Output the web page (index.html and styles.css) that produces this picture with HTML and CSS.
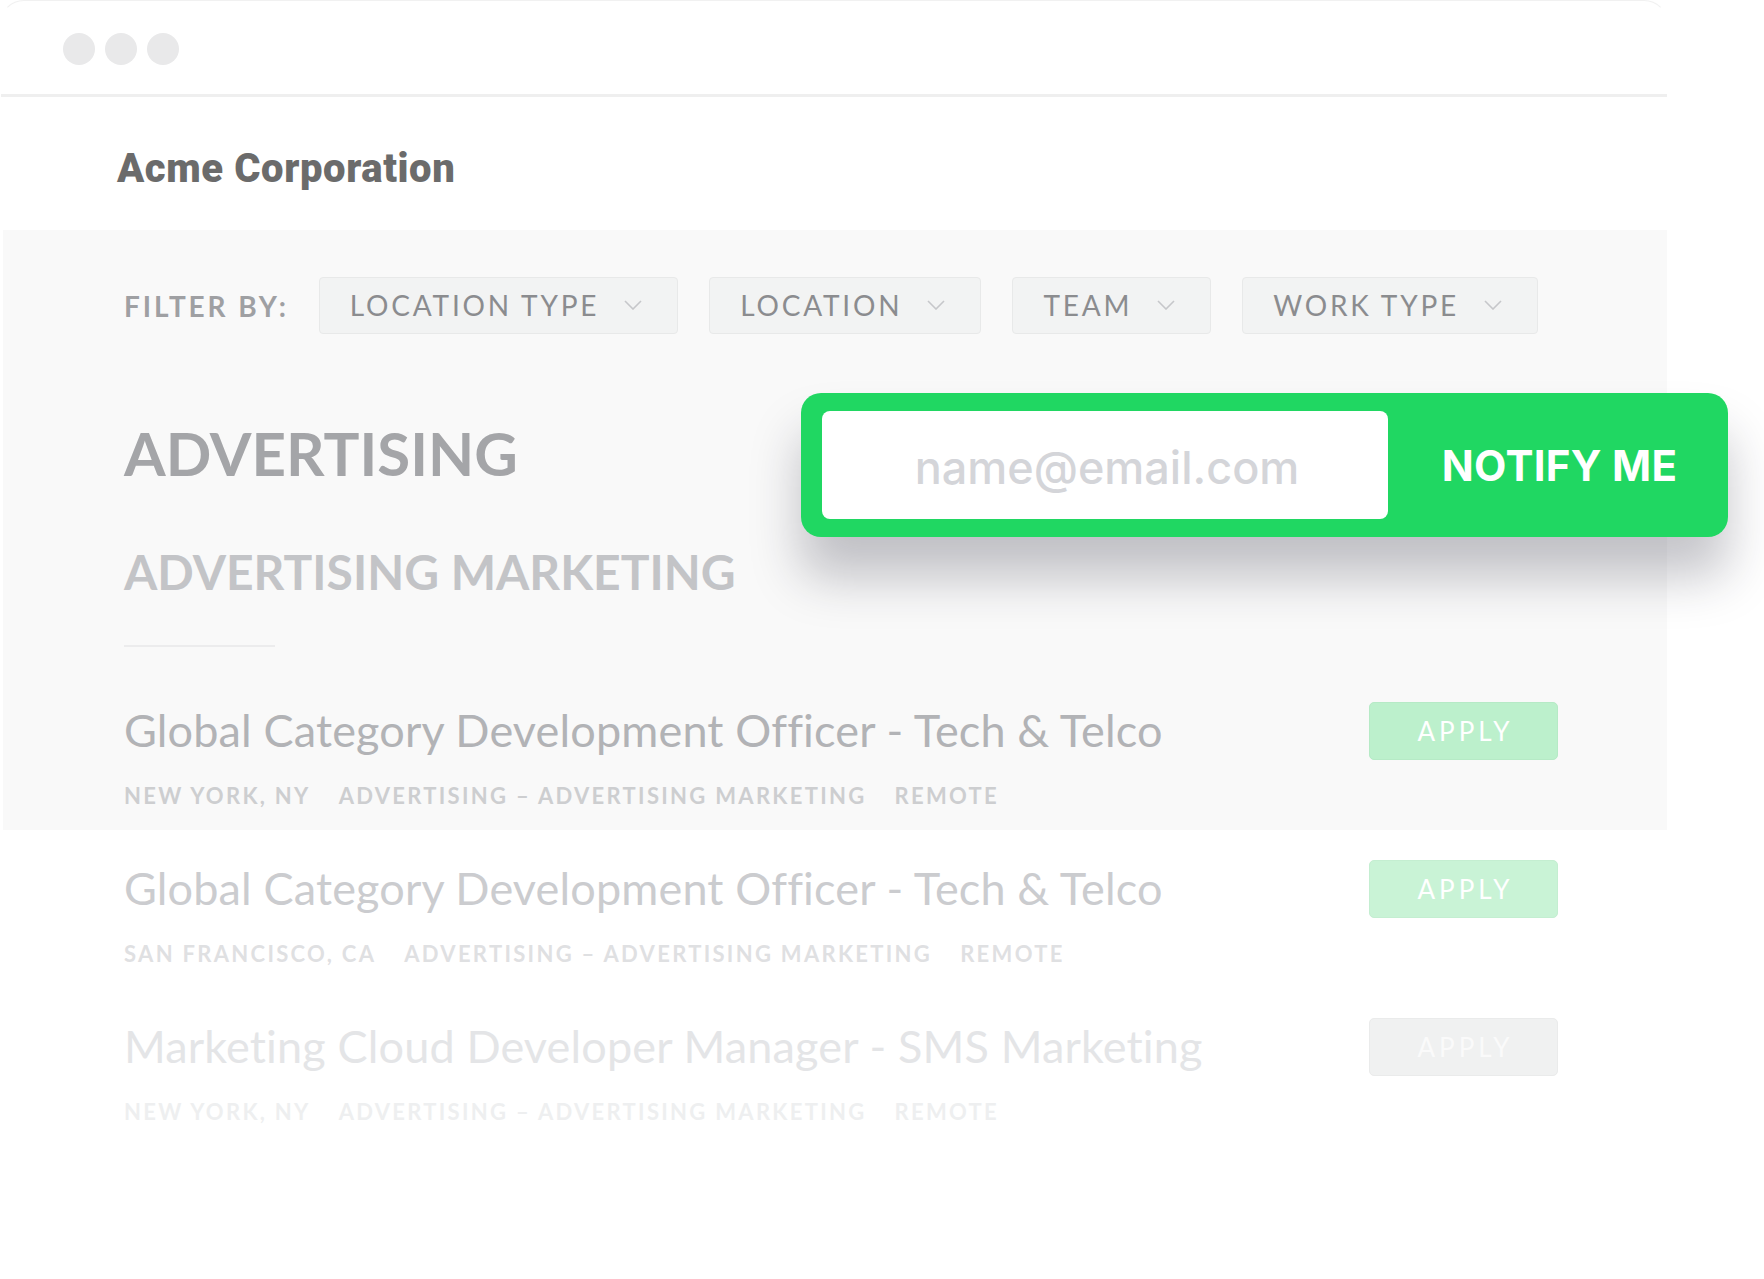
FILE: index.html
```html
<!DOCTYPE html>
<html lang="en">
<head>
<meta charset="utf-8">
<title>Acme Corporation – Jobs</title>
<link rel="stylesheet" href="styles.css">
</head>
<body>
<div class="window">
  <div class="titlebar">
    <span class="dot"></span><span class="dot"></span><span class="dot"></span>
  </div>
  <header class="brand">Acme Corporation</header>
  <section class="board">
    <div class="filters">
      <span class="filter-label">FILTER BY:</span>
      <div class="filter"><span>LOCATION TYPE</span><svg class="chev" viewBox="0 0 18 10" width="18" height="10"><polyline points="1,1 9,9 17,1"/></svg></div>
      <div class="filter"><span>LOCATION</span><svg class="chev" viewBox="0 0 18 10" width="18" height="10"><polyline points="1,1 9,9 17,1"/></svg></div>
      <div class="filter"><span>TEAM</span><svg class="chev" viewBox="0 0 18 10" width="18" height="10"><polyline points="1,1 9,9 17,1"/></svg></div>
      <div class="filter"><span>WORK TYPE</span><svg class="chev" viewBox="0 0 18 10" width="18" height="10"><polyline points="1,1 9,9 17,1"/></svg></div>
    </div>
    <h1 class="category">ADVERTISING</h1>
    <h2 class="team">ADVERTISING MARKETING</h2>
    <hr class="rule">
    <ul class="jobs">
      <li class="job job-a">
        <div class="job-info">
          <p class="job-title">Global Category Development Officer - Tech &amp; Telco</p>
          <p class="job-meta"><span>NEW YORK, NY</span><span>ADVERTISING – ADVERTISING MARKETING</span><span>REMOTE</span></p>
        </div>
        <span class="apply">APPLY</span>
      </li>
      <li class="job job-b">
        <div class="job-info">
          <p class="job-title">Global Category Development Officer - Tech &amp; Telco</p>
          <p class="job-meta"><span>SAN FRANCISCO, CA</span><span>ADVERTISING – ADVERTISING MARKETING</span><span>REMOTE</span></p>
        </div>
        <span class="apply">APPLY</span>
      </li>
      <li class="job job-c">
        <div class="job-info">
          <p class="job-title">Marketing Cloud Developer Manager - SMS Marketing</p>
          <p class="job-meta"><span>NEW YORK, NY</span><span>ADVERTISING – ADVERTISING MARKETING</span><span>REMOTE</span></p>
        </div>
        <span class="apply">APPLY</span>
      </li>
    </ul>
  </section>
  <form class="notify">
    <input class="notify-input" type="email" placeholder="name@email.com">
    <button class="notify-btn" type="button">NOTIFY ME</button>
  </form>
</div>
</body>
</html>
```
FILE: styles.css
```css
* { box-sizing: border-box; }
html, body { margin: 0; background: #ffffff; }
body {
  width: 1764px;
  height: 1279px;
  overflow: hidden;
  font-family: Lato, "Noto Sans", sans-serif;
}
.window {
  position: relative;
  width: 1668px;
  height: 1279px;
  background: #ffffff;
  border: 1px solid transparent;
  border-top-color: #f1f1f1;
  border-bottom: none;
  border-radius: 24px 24px 0 0;
}
.titlebar {
  display: flex;
  align-items: center;
  gap: 10px;
  height: 96px;
  padding: 2px 0 0 62px;
  border-bottom: 3px solid #efefef;
}
.dot {
  width: 32px;
  height: 32px;
  border-radius: 50%;
  background: #e9e9ea;
}
.brand {
  padding: 53px 0 42px 116px;
  font: 900 40px/38px Roboto, "Liberation Sans", sans-serif;
  letter-spacing: 0.6px;
  color: #6b6b6b;
}
.board {
  margin: 0 0 0 2px;
  padding: 47px 109px 0 121px;
  background: linear-gradient(#f9f9f9, #f9f9f9) top left / 100% 600px no-repeat;
}
.filters {
  display: flex;
  align-items: center;
  gap: 31px;
  height: 57px;
}
.filter-label {
  font: 700 28px/28px Lato, sans-serif;
  letter-spacing: 2.9px;
  color: #9fa0a3;
  margin-right: -1px;
}
.filter {
  display: flex;
  align-items: center;
  gap: 25px;
  height: 57px;
  padding: 0 35px 2px 30px;
  background: #f2f3f3;
  border: 1px solid #e8e9e9;
  border-radius: 4px;
  font: 400 28px/28px Lato, sans-serif;
  letter-spacing: 2.8px;
  color: #8b8c8f;
}
.chev polyline {
  fill: none;
  stroke: #c6c7ca;
  stroke-width: 1.6;
}
.category {
  margin: 89px 0 0;
  font: 700 60px/60px Lato, sans-serif;
  color: #a4a5a8;
}
.team {
  margin: 65px 0 0;
  font: 700 48px/48px Lato, sans-serif;
  color: #c3c4c7;
}
.rule {
  width: 151px;
  height: 2px;
  margin: 49px 0 0;
  border: 0;
  background: #ececed;
}
.jobs {
  list-style: none;
  margin: 55px 0 0;
  padding: 0;
}
.job {
  display: flex;
  justify-content: space-between;
  align-items: flex-start;
  height: 158px;
}
.job-title {
  margin: 6px 0 0;
  font: 400 45px/45px Lato, sans-serif;
  letter-spacing: 0.15px;
  color: var(--title);
}
.job-meta {
  display: flex;
  gap: 28px;
  margin: 32px 0 0;
  font: 700 22px/22px Lato, sans-serif;
  letter-spacing: 2.3px;
  color: var(--meta);
}
.apply {
  display: flex;
  align-items: center;
  justify-content: center;
  width: 189px;
  height: 58px;
  padding-left: 4px;
  border-radius: 5px;
  border: 1px solid var(--apply-border);
  background: var(--apply);
  font: 400 26px/26px Lato, sans-serif;
  letter-spacing: 4px;
  color: var(--apply-text);
}
.job-a { --title: #b2b3b6; --meta: #cdced0; --apply: #bcf0cc; --apply-border: #b6eac6; --apply-text: #ffffff; }
.job-b { --title: #cbcccf; --meta: #dfe0e2; --apply: #c9f3d6; --apply-border: #c4eed1; --apply-text: #ffffff; }
.job-c { --title: #e4e5e7; --meta: #eeeff0; --apply: #f0f1f1; --apply-border: #eaebeb; --apply-text: #fafafa; }

.notify {
  position: absolute;
  left: 800px;
  top: 392px;
  width: 927px;
  height: 144px;
  display: flex;
  align-items: center;
  margin: 0;
  padding: 0 0 0 21px;
  background: #20d762;
  border-radius: 20px;
  box-shadow: 0 40px 50px rgba(30, 30, 50, 0.26);
}
.notify-input {
  width: 566px;
  height: 108px;
  padding: 5px 0 0 4px;
  border: 0;
  border-radius: 8px;
  background: #ffffff;
  font: 500 45px Inter, "Noto Sans", sans-serif;
  color: #9a9ba0;
  text-align: center;
  outline: none;
}
.notify-input::placeholder { color: #d4d5d9; }
.notify-btn {
  flex: 1;
  height: 108px;
  padding: 0 0 0 3px;
  border: 0;
  background: none;
  font: 700 42px Inter, "Noto Sans", sans-serif;
  letter-spacing: 0.3px;
  color: #ffffff;
}
```
